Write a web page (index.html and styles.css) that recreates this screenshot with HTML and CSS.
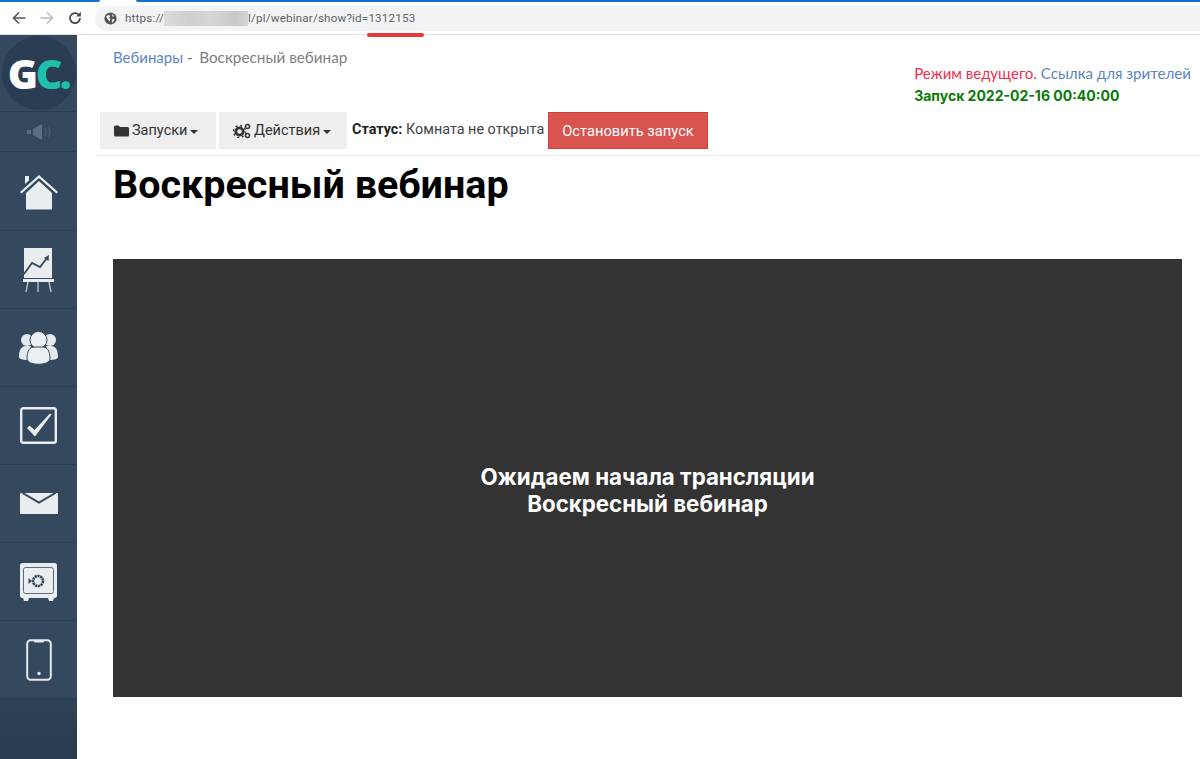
FILE: index.html
```html
<!DOCTYPE html>
<html lang="ru">
<head>
<meta charset="utf-8">
<title>Воскресный вебинар</title>
<link rel="stylesheet" href="styles.css">
</head>
<body>
<header class="chrome">
  <div class="tabstrip"><span class="tab-a"></span><span class="tab-b"></span></div>
  <div class="navbar">
    <svg class="nav-icon" viewBox="0 0 16 16"><path d="M14.500 8H3M8 2.500 2.500 8 8 13.500" fill="none" stroke="#555" stroke-width="1.600"/></svg>
    <svg class="nav-icon" viewBox="0 0 16 16"><path d="M1.500 8H13M8 2.500 13.500 8 8 13.500" fill="none" stroke="#b8b8b8" stroke-width="1.400"/></svg>
    <svg class="nav-icon" viewBox="0 0 16 16"><path d="M13 8a5 5 0 1 1-1.500-3.500" fill="none" stroke="#444" stroke-width="1.700"/><path d="M13.800 1.800v4.600H9.200z" fill="#444"/></svg>
    <div class="omnibox">
      <svg class="globe" viewBox="0 0 16 16"><circle cx="8" cy="8" r="7.500" fill="#555"/><path d="M2.500 5.500 6 3.500l1.500 1.500-1 2L8 8.500 7 12 5 9.500zM10 2.500l2.500 2.500-2 1zM10 9l3-.5L11 13l-1.500-.5z" fill="#eef0f2"/></svg>
      <span class="url">https://</span><span class="redacted"></span><span class="url">l/pl/webinar/show?id=1312153</span>
      <span class="underline"></span>
    </div>
  </div>
</header>
<div class="app">
  <aside class="sidebar">
    <div class="logo-cell"><div class="logo"><span class="logo-g">G</span><span class="logo-c">C.</span></div></div>
    <div class="sound-cell">
      <svg class="sound" viewBox="0 0 26 18"><path d="M1 7h4v4H1zM7 6l9-5v16l-9-5z" fill="#5a6e83"/><path d="M19 5c1.500 2.500 1.500 5.500 0 8M22 4c2 3 2 7 0 10" fill="none" stroke="#4c6076" stroke-width="1"/></svg>
    </div>
    <a class="item">
      <svg class="ico-home" viewBox="0 0 40 37"><path d="M1 19 20 2l19 17-1.500 1.500L20 5 2.500 20.500z" fill="#e9edef"/><path d="M6 11V3h4v4.500zM7 20 20 8l13 12v16.500H7z" fill="#e9edef"/></svg>
    </a>
    <a class="item">
      <svg class="ico-chart" viewBox="0 0 31 44"><path d="M1 0h28v30H1z" fill="#e9edef"/><path d="M1 26 9 15l8 4 7-9" fill="none" stroke="#34495e" stroke-width="1.800"/><path d="M26 7l-.5 6-4.500-3z" fill="#34495e"/><path d="M0 31h31v3H0z" fill="#e9edef"/><path d="M5 34 3 44M15 34v10M26 34l2 10" stroke="#b9c3cb" stroke-width="1.400"/></svg>
    </a>
    <a class="item">
      <svg class="ico-users" viewBox="0 0 39 34"><circle cx="8" cy="9" r="6" fill="#e4e9ec"/><circle cx="31" cy="9" r="6" fill="#e4e9ec"/><path d="M0 26c0-7 2-11 7-11h5L8 29c-4 0-8-1-8-3zM39 26c0-7-2-11-7-11h-5l4 14c4 0 8-1 8-3z" fill="#e4e9ec"/><circle cx="19.500" cy="9" r="8.500" fill="#edf0f2" stroke="#34495e"/><path d="M8 28c0-9 3-12 8-12h7c5 0 8 3 8 12 0 7-23 7-23 0z" fill="#edf0f2" stroke="#34495e"/></svg>
    </a>
    <a class="item">
      <svg class="ico-check" viewBox="0 0 37 37"><rect x="1.200" y="1.200" width="34.600" height="34.600" rx="2" fill="none" stroke="#e9edef" stroke-width="2.400"/><path d="M7 21l2.500-2.500 5 4.500L30 6.500l1.500 1L15 29.500z" fill="#e9edef"/></svg>
    </a>
    <a class="item">
      <svg class="ico-mail" viewBox="0 0 38 21"><rect width="38" height="21" rx="1" fill="#e9edef"/><path d="M2.500 0 19 9.500 35.500 0" fill="none" stroke="#34495e" stroke-width="2"/></svg>
    </a>
    <a class="item">
      <svg class="ico-safe" viewBox="0 0 37 38"><rect width="37" height="35" rx="2.500" fill="#e9edef"/><rect x="3.500" y="4.500" width="30" height="26" rx="2" fill="none" stroke="#5b6c7d" stroke-width="1"/><path d="M3 35h6l-1 3H4zM28 35h6l-1 3h-4z" fill="#e9edef"/><circle cx="18" cy="18" r="5" fill="none" stroke="#34495e" stroke-width="2.600" stroke-dasharray="2.200 .6"/><path d="M8.500 15v6l3.500-3z" fill="#34495e"/></svg>
    </a>
    <a class="item">
      <svg class="ico-phone" viewBox="0 0 26 42"><rect x="1.200" y="1.200" width="23.600" height="39.600" rx="3.500" fill="none" stroke="#e3e8eb" stroke-width="2"/><path d="M8 1h10v1.500a1 1 0 0 1-1 1H9a1 1 0 0 1-1-1z" fill="#e3e8eb"/><circle cx="13" cy="34.500" r="1.700" fill="#e9edef"/></svg>
    </a>
    <div class="sidebar-rest"></div>
  </aside>
  <main class="content">
    <div class="top">
      <div class="crumbs"><a class="link">Вебинары</a> <span class="dash">-</span>&nbsp; <span class="current">Воскресный вебинар</span></div>
      <div class="mode">
        <div><span class="host">Режим ведущего.</span> <a class="link">Ссылка для зрителей</a></div>
        <div class="launch">Запуск 2022-02-16 00:40:00</div>
      </div>
    </div>
    <div class="toolbar">
      <button class="btn first">
        <svg class="btn-ico" viewBox="0 0 15 12"><path d="M0 2a1.500 1.500 0 0 1 1.500-1.500h3L6 2h7.500A1.500 1.500 0 0 1 15 3.500V10a1.500 1.500 0 0 1-1.500 1.500h-12A1.500 1.500 0 0 1 0 10z" fill="#333"/></svg>
        Запуски <i class="caret"></i>
      </button>
      <button class="btn second">
        <svg class="gears" viewBox="0 0 18 16"><circle cx="6.500" cy="8.500" r="3.700" fill="none" stroke="#333" stroke-width="2.800"/><circle cx="6.500" cy="8.500" r="6" fill="none" stroke="#333" stroke-width="1.400" stroke-dasharray="2 2.700"/><circle cx="14.500" cy="3.500" r="2" fill="none" stroke="#333" stroke-width="1.500"/><circle cx="14.500" cy="12.500" r="2" fill="none" stroke="#333" stroke-width="1.500"/></svg>
        Действия <i class="caret"></i>
      </button>
      <div class="status"><b>Статус:</b> Комната не открыта</div>
      <button class="btn-stop">Остановить запуск</button>
    </div>
    <h1 class="title">Воскресный вебинар</h1>
    <section class="player">
      <p>Ожидаем начала трансляции<br>Воскресный вебинар</p>
    </section>
  </main>
</div>
</body>
</html>
```
FILE: styles.css
```css
* { box-sizing: border-box; }
html, body { margin: 0; height: 100%; }
body {
  width: 1200px;
  height: 759px;
  overflow: hidden;
  background: #fff;
  font-family: "Lato", "Open Sans", "Liberation Sans", sans-serif;
  display: flex;
  flex-direction: column;
}
.chrome { height: 35px; flex: none; border-bottom: 1px solid #dfe1e4; background: #fff; }
.tabstrip { height: 2px; display: flex; background: #fff; }
.tab-a { width: 100px; background: #0f73d2; border-radius: 0 0 4px 0; }
.tab-b { flex: 1; margin-left: 36px; background: #0f73d2; border-radius: 0 0 0 4px; }
.navbar { height: 32px; display: flex; align-items: center; padding-left: 11px; gap: 12px; }
.nav-icon { width: 16px; height: 16px; flex: none; }
.omnibox {
  position: relative;
  flex: 1;
  height: 25px;
  display: flex;
  align-items: center;
  background: #f1f3f4;
  border-radius: 12px 0 0 12px;
  padding-left: 9px;
  font: 11.700px "Roboto", "Liberation Sans", sans-serif;
  color: #5f6368;
}
.globe { width: 13px; height: 13px; margin-right: 8px; flex: none; }
.redacted { width: 84px; height: 15px; background: linear-gradient(90deg, #dcdcdc, #cfcfcf 30%, #d6d6d6 55%, #c8c8c8 85%, #d4d4d4); }
.url { letter-spacing: .15px; }
.underline { position: absolute; left: 272px; top: 27px; width: 57px; height: 4px; border-radius: 2px; background: #e53935; }
.app { flex: 1; display: flex; min-height: 0; }
.sidebar { width: 77px; flex: none; display: flex; flex-direction: column; background: #34495e; }
.logo-cell { height: 77px; display: flex; align-items: center; justify-content: center; border-bottom: 1px solid #2b3d50; flex: none; }
.logo {
  width: 74px;
  height: 74px;
  border-radius: 50%;
  background: #2a3d53;
  display: flex;
  align-items: center;
  justify-content: center;
  font: 800 41px "Open Sans", sans-serif;
  letter-spacing: -2.500px;
}
.logo-g { color: #fff; }
.logo-c { color: #1ec0ab; }
.sound-cell { height: 40px; display: flex; align-items: center; justify-content: center; border-bottom: 1px solid #2b3d50; flex: none; }
.sound { width: 26px; height: 18px; }
.item { height: 78px; display: flex; align-items: center; justify-content: center; border-bottom: 1px solid #2b3d50; flex: none; }
.item:nth-of-type(1) { height: 79px; }
.ico-home { width: 40px; height: 37px; }
.ico-chart { width: 31px; height: 44px; }
.ico-users { width: 39px; height: 34px; }
.ico-check { width: 37px; height: 37px; }
.ico-mail { width: 38px; height: 21px; }
.ico-safe { width: 37px; height: 38px; }
.ico-phone { width: 26px; height: 42px; }
.sidebar-rest { flex: 1; background: linear-gradient(#2f4256, #293b4e); }
.content { flex: 1; min-width: 0; padding-left: 19px; display: flex; flex-direction: column; }
.top { height: 77px; display: flex; justify-content: space-between; padding: 13px 9px 0 17px; font-size: 15px; }
.crumbs { color: #808080; }
.current { font-size: 15.300px; margin-left: -1px; }
.link { color: #5b86c4; }
.dash { color: #666; }
.mode { padding-top: 14px; line-height: 22px; white-space: nowrap; font-size: 15.100px; }
.host { color: #f0304f; }
.launch { color: #0a7a0a; margin-top: 1px; font: 700 14px/22px "Inter", sans-serif; }
.toolbar { height: 44px; display: flex; align-items: flex-start; padding-left: 4px; border-bottom: 1px solid #eee; }
.btn {
  height: 37px;
  border: 0;
  background: #eee;
  color: #333;
  font: 14.500px "Roboto", sans-serif;
  display: flex;
  align-items: center;
  gap: 3px;
  padding: 0;
}
.first { width: 116px; padding-left: 14px; }
.second { width: 128px; margin-left: 3px; padding-left: 14px; }
.btn-ico { width: 15px; height: 12px; }
.gears { width: 18px; height: 16px; }
.caret { width: 0; height: 0; border-left: 4px solid transparent; border-right: 4px solid transparent; border-top: 4px solid #333; margin-top: 3px; }
.status { width: 201px; padding: 9px 0 0 5px; font: 14.400px "Roboto", sans-serif; color: #444; white-space: nowrap; }
.status b { color: #222; }
.btn-stop {
  width: 160px;
  height: 37px;
  border: 1px solid #d43f3a;
  background: #d9534f;
  color: #fff;
  font: 14.700px "Roboto", sans-serif;
}
.title { margin: 7px 0 0 17px; font: 700 39.500px/44px "Roboto", sans-serif; color: #000; }
.player {
  margin: 52px 18px 0 17px;
  height: 438px;
  background: #333;
  display: flex;
  align-items: center;
  justify-content: center;
  padding-top: 24px;
}
.player p { margin: 0; text-align: center; color: #fff; font: 700 22.300px/27px "Inter", sans-serif; }
```
